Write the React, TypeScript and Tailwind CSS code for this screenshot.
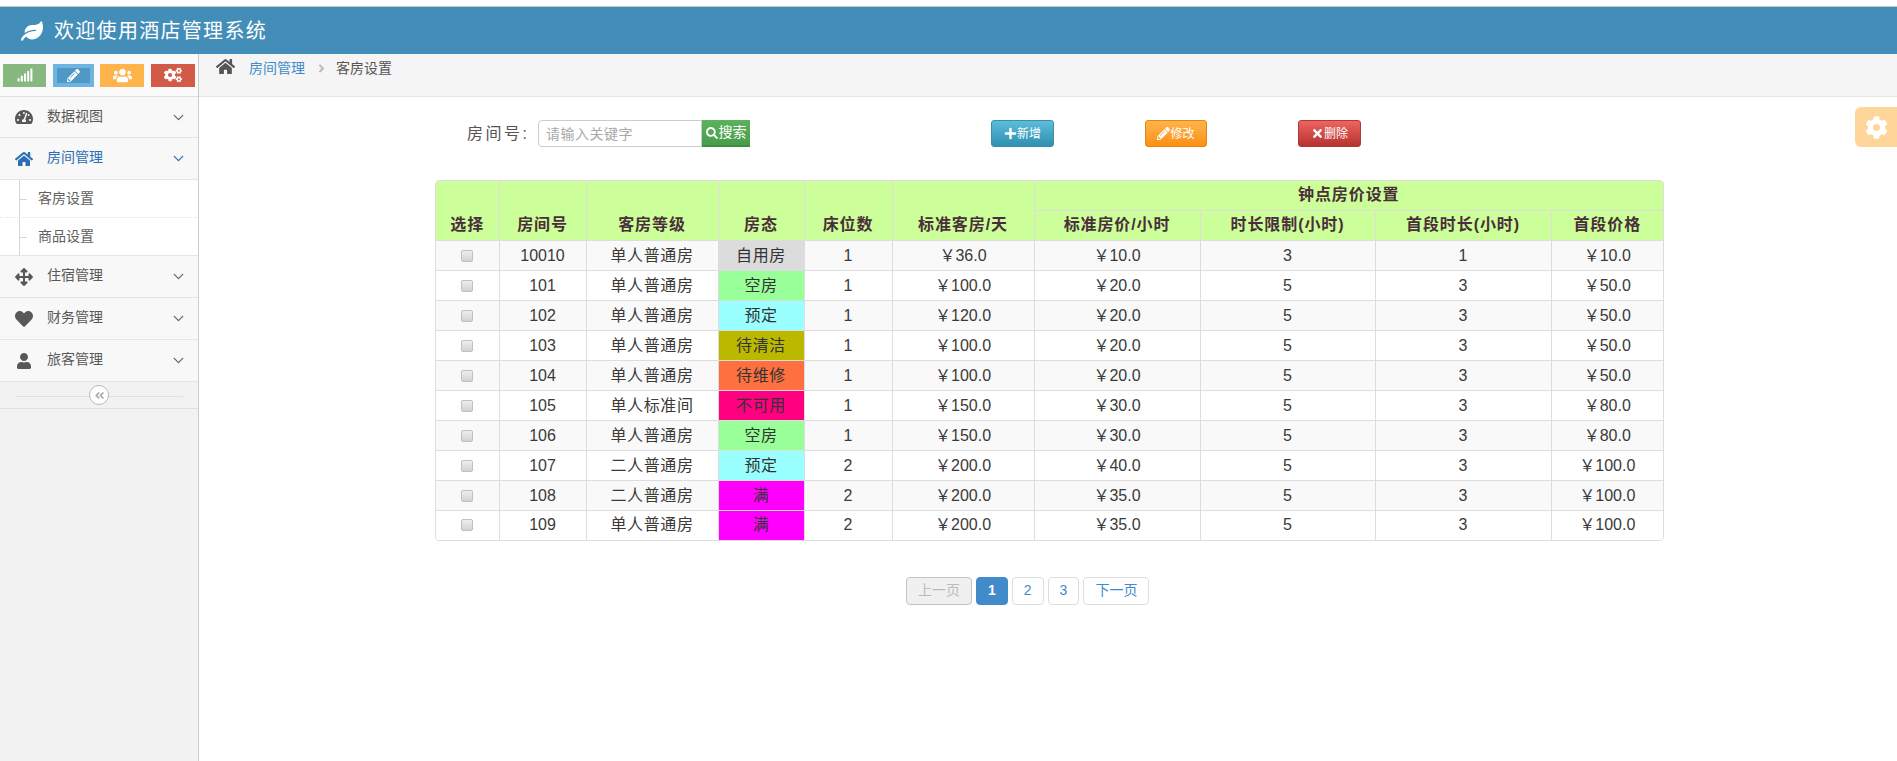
import { ChevronDown } from "lucide-react";
import {
  FaAngleDoubleLeft,
  FaAngleRight,
  FaArrowsAlt,
  FaCog,
  FaCogs,
  FaHeart,
  FaHome,
  FaLeaf,
  FaPencilAlt,
  FaPlus,
  FaSearch,
  FaSignal,
  FaTachometerAlt,
  FaTimes,
  FaUser,
  FaUsers,
} from "react-icons/fa";

const yuan = "\uFFE5";

const rooms = [
  ["10010", "单人普通房", "自用房", "bg-[#dcdcdc]", "1", "36.0", "10.0", "3", "1", "10.0"],
  ["101", "单人普通房", "空房", "bg-[#99ff99]", "1", "100.0", "20.0", "5", "3", "50.0"],
  ["102", "单人普通房", "预定", "bg-[#99ffff]", "1", "120.0", "20.0", "5", "3", "50.0"],
  ["103", "单人普通房", "待清洁", "bg-[#bbb800]", "1", "100.0", "20.0", "5", "3", "50.0"],
  ["104", "单人普通房", "待维修", "bg-[#ff7040]", "1", "100.0", "20.0", "5", "3", "50.0"],
  ["105", "单人标准间", "不可用", "bg-[#ff0080]", "1", "150.0", "30.0", "5", "3", "80.0"],
  ["106", "单人普通房", "空房", "bg-[#99ff99]", "1", "150.0", "30.0", "5", "3", "80.0"],
  ["107", "二人普通房", "预定", "bg-[#99ffff]", "2", "200.0", "40.0", "5", "3", "100.0"],
  ["108", "二人普通房", "满", "bg-[#ff00ff]", "2", "200.0", "35.0", "5", "3", "100.0"],
  ["109", "单人普通房", "满", "bg-[#ff00ff]", "2", "200.0", "35.0", "5", "3", "100.0"],
];

function MenuItem({ icon, label, active, first }: { icon: React.ReactNode; label: string; active?: boolean; first?: boolean }) {
  return (
    <div
      className={`flex items-center border-b border-[#e5e5e5] bg-[#f8f8f8] pl-[14px] pr-[11px] text-[14px] ${
        first ? "h-[41px]" : "h-[42px]"
      } ${active ? "text-[#2b6eb5]" : "text-[#585858]"}`}
    >
      <span className="flex w-[19px] justify-center text-[18px]">{icon}</span>
      <span className="ml-[14px] flex-1 pb-[2px]">{label}</span>
      <ChevronDown size={17} strokeWidth={1.8} className={active ? "text-[#2b6eb5]" : "text-[#666]"} />
    </div>
  );
}

function SubItem({ label, last }: { label: string; last?: boolean }) {
  return (
    <div
      className={`relative flex items-center pl-[38px] text-[14px] text-[#616161] ${
        last ? "h-[37px]" : "h-[38px] border-b border-dotted border-[#e4e4e4]"
      }`}
    >
      <span className="absolute left-[19px] top-1/2 h-px w-[8px] bg-[#ccd9e5]" />
      {label}
    </div>
  );
}

function PageLink({ children, current, disabled }: { children: React.ReactNode; current?: boolean; disabled?: boolean }) {
  let tone = "border-[#ddd] bg-white text-[#428bca]";
  if (current) tone = "border-[#428bca] bg-[#428bca] text-white font-bold";
  if (disabled) tone = "border-[#c4c4c4] bg-[#f0f0f0] text-[#bbb]";
  return <a className={`flex h-[28px] items-center justify-center rounded-[4px] border px-[11px] ${tone}`}>{children}</a>;
}

const th = "border border-[#ddd] bg-[#ccff99] px-0 pb-[4px] pt-[3px] align-bottom text-[16px] font-bold leading-[22px] tracking-[0.9px] text-[#4a2f3a]";
const td = "border border-[#ddd] p-0 text-center";

export default function App() {
  return (
    <div className="flex h-screen flex-col overflow-hidden bg-white font-['Liberation_Sans','Noto_Sans_CJK_SC',sans-serif]">
      <div className="h-[6px] border-b border-[#c8c8c8] bg-white box-content" />
      <header className="flex h-[47px] shrink-0 items-center bg-[#438eb9] pl-[21px] text-white">
        <FaLeaf className="text-[22px]" />
        <span className="ml-[11px] text-[20px] tracking-[1.3px]">欢迎使用酒店管理系统</span>
      </header>

      <div className="flex min-h-0 flex-1">
        <aside className="w-[199px] shrink-0 border-r border-[#cccccc] bg-[#f2f2f2]">
          <div className="flex h-[43px] items-center gap-[6px] border-b border-[#e0e0e0] bg-[#fafafa] pl-[3px]">
            <span className="flex h-[23px] w-[43px] items-center justify-center bg-[#87b87f] text-[16px] text-white"><FaSignal /></span>
            <span className="ml-[1px] flex h-[23px] w-[41px] items-center justify-center bg-[#6fb3e0] text-white"><span className="flex h-[15px] w-[33px] items-center justify-center bg-[#4f99c6] text-[13px]"><FaPencilAlt /></span></span>
            <span className="flex h-[23px] w-[44px] items-center justify-center bg-[#ffb44b] text-[19px] text-white"><FaUsers /></span>
            <span className="ml-[1px] flex h-[23px] w-[44px] items-center justify-center bg-[#d15b47] text-[18px] text-white"><FaCogs /></span>
          </div>
          <MenuItem icon={<FaTachometerAlt />} label="数据视图" first />
          <MenuItem icon={<FaHome />} label="房间管理" active />
          <div className="relative border-b border-[#e5e5e5] bg-white">
            <span className="absolute bottom-0 left-[19px] top-0 w-px bg-[#ccd9e5]" />
            <SubItem label="客房设置" />
            <SubItem label="商品设置" last />
          </div>
          <MenuItem icon={<FaArrowsAlt />} label="住宿管理" />
          <MenuItem icon={<FaHeart />} label="财务管理" />
          <MenuItem icon={<FaUser className="text-[16px]" />} label="旅客管理" />
          <div className="relative flex h-[27px] items-center justify-center border-b border-[#e0e0e0]">
            <span className="absolute left-[16px] right-[15px] top-[14px] h-px bg-[#e0e0e0]" />
            <span className="relative flex h-[20px] w-[20px] items-center justify-center rounded-full border border-[#bbb] bg-white text-[11px] text-[#aaa]">
              <FaAngleDoubleLeft />
            </span>
          </div>
        </aside>

        <main className="relative min-w-0 flex-1">
          <div className="flex h-[43px] items-start border-b border-[#e5e5e5] bg-[#f5f5f5] pl-[17px] pt-[2px] text-[14px] leading-[22px]">
            <FaHome className="mt-[1px] text-[19px] text-[#555]" />
            <span className="ml-[14px] mt-[1px] text-[#428bca]">房间管理</span>
            <FaAngleRight className="ml-[10px] mt-[6px] text-[13px] text-[#bbb]" />
            <span className="ml-[8px] mt-[1px] text-[#555]">客房设置</span>
          </div>

          <div className="absolute right-0 top-[53px] flex h-[40px] w-[42px] items-center justify-center rounded-l-[6px] bg-[#ffd699] text-[23px] text-white">
            <FaCog />
          </div>

          <div className="mt-[23px] flex h-[27px] pl-[268px]">
            <span className="flex w-[71px] shrink-0 items-center whitespace-nowrap text-[16px] tracking-[2.5px] text-[#555]">房间号:</span>
            <input
              placeholder="请输入关键字"
              className="h-[27px] w-[164px] rounded-l-[4px] border border-[#ccc] px-[7px] text-[14px] tracking-[0.5px] outline-none placeholder:text-[#a9a9a9]"
            />
            <button className="flex h-[27px] w-[48px] items-center justify-center gap-[1px] border-b-2 border-[#3e8e41] bg-gradient-to-b from-[#5cb35c] to-[#4a9c4a] text-[14px] text-white">
              <FaSearch className="text-[12px]" />搜索
            </button>
            <button className="ml-[241px] flex h-[27px] w-[63px] items-center justify-center rounded-[3px] border border-[#3b8eaa] bg-gradient-to-b from-[#5bbcdc] to-[#3090b0] text-[12px] text-white">
              <FaPlus className="text-[13px]" />新增
            </button>
            <button className="ml-[91px] flex h-[27px] w-[62px] items-center justify-center rounded-[3px] border border-[#e08a10] bg-gradient-to-b from-[#ffb44b] to-[#fb8f0a] text-[12px] text-white">
              <FaPencilAlt className="text-[13px]" />修改
            </button>
            <button className="ml-[91px] flex h-[27px] w-[63px] items-center justify-center rounded-[3px] border border-[#b03a38] bg-gradient-to-b from-[#ee6460] to-[#b5322f] text-[12px] text-white">
              <FaTimes className="text-[13px]" />删除
            </button>
          </div>

          <div className="ml-[236px] mt-[33px] w-[1229px] overflow-hidden rounded-[4px] border border-[#ddd]">
            <table className="w-[1227px] table-fixed border-collapse border-hidden text-[16px] text-[#3a3a3a]">
              <colgroup>
                <col className="w-[63px]" />
                <col className="w-[87px]" />
                <col className="w-[132px]" />
                <col className="w-[86px]" />
                <col className="w-[88px]" />
                <col className="w-[142px]" />
                <col className="w-[166px]" />
                <col className="w-[175px]" />
                <col className="w-[176px]" />
                <col className="w-[112px]" />
              </colgroup>
              <thead>
                <tr className="h-[29px]">
                  <th rowSpan={2} className={th}>选择</th>
                  <th rowSpan={2} className={th}>房间号</th>
                  <th rowSpan={2} className={th}>客房等级</th>
                  <th rowSpan={2} className={th}>房态</th>
                  <th rowSpan={2} className={th}>床位数</th>
                  <th rowSpan={2} className={th}>标准客房/天</th>
                  <th colSpan={4} className={th}>钟点房价设置</th>
                </tr>
                <tr className="h-[30px]">
                  <th className={th}>标准房价/小时</th>
                  <th className={th}>时长限制(小时)</th>
                  <th className={th}>首段时长(小时)</th>
                  <th className={th}>首段价格</th>
                </tr>
              </thead>
              <tbody>
                {rooms.map((r, i) => (
                  <tr
                    key={r[0]}
                    className={`${i === rooms.length - 1 ? "h-[29px]" : "h-[30px]"} ${i % 2 === 0 ? "bg-[#f9f9f9]" : "bg-white"}`}
                  >
                    <td className={td}>
                      <span className="mx-auto block h-[12px] w-[12px] rounded-[2px] border border-[#c0c0c0] bg-gradient-to-b from-[#eeeeee] to-[#d2d2d2]" />
                    </td>
                    <td className={td}>{r[0]}</td>
                    <td className={`${td} tracking-[0.6px]`}>{r[1]}</td>
                    <td className={`${td} ${r[3]} tracking-[0.6px] text-[#333]`}>{r[2]}</td>
                    <td className={td}>{r[4]}</td>
                    <td className={td}>{yuan}{r[5]}</td>
                    <td className={td}>{yuan}{r[6]}</td>
                    <td className={td}>{r[7]}</td>
                    <td className={td}>{r[8]}</td>
                    <td className={td}>{yuan}{r[9]}</td>
                  </tr>
                ))}
              </tbody>
            </table>
          </div>

          <div className="ml-[707px] mt-[36px] flex gap-[4px] text-[14px]">
            <PageLink disabled>上一页</PageLink>
            <PageLink current>1</PageLink>
            <PageLink>2</PageLink>
            <PageLink>3</PageLink>
            <PageLink>下一页</PageLink>
          </div>
        </main>
      </div>
    </div>
  );
}
